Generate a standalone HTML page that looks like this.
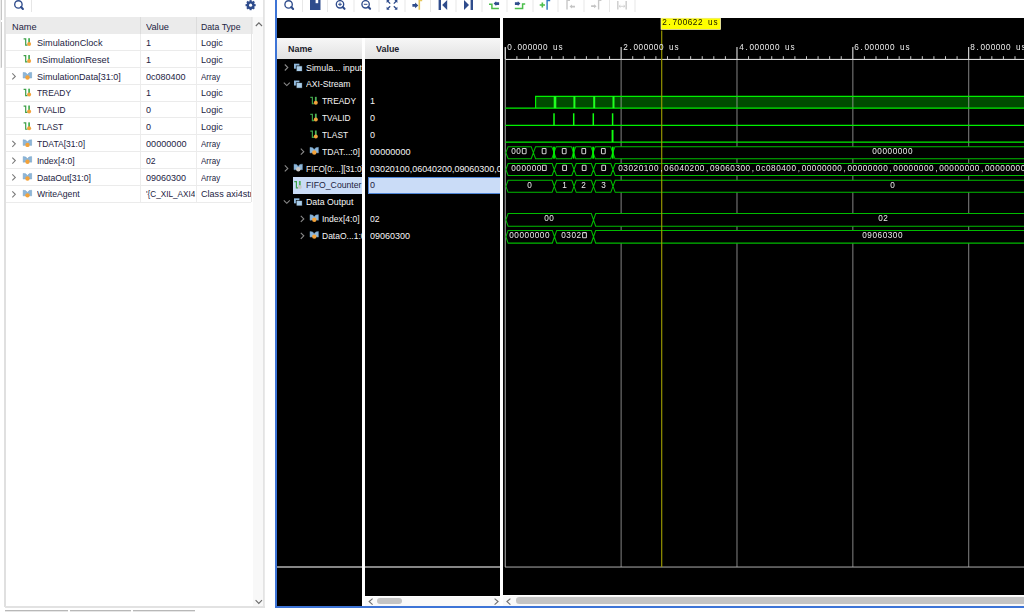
<!DOCTYPE html><html><head><meta charset="utf-8"><title>Vivado Simulation</title><style>
*{margin:0;padding:0;box-sizing:border-box}
html,body{width:1024px;height:612px;overflow:hidden;background:#fff}
body{position:relative;font-family:"Liberation Sans",sans-serif;font-size:9px}
.a{position:absolute}
.t{position:absolute;white-space:nowrap;line-height:12px;color:#23233f}
.w{color:#f4f4f4}
.m{position:absolute;white-space:nowrap;font-family:"Liberation Sans",sans-serif;font-size:8.2px;line-height:10px;color:#ececec;will-change:transform}
.m i{display:inline-block;width:5.1px;text-align:center;font-style:normal}
svg{position:absolute;left:0;top:0}
</style></head><body>
<div class="a" style="left:0px;top:0px;width:1px;height:68px;background:#ececec;"></div>
<div class="a" style="left:1px;top:0px;width:1px;height:20px;background:#c6c6c6;"></div>
<div class="a" style="left:1px;top:21.5px;width:1px;height:46px;background:#c6c6c6;border-bottom-left-radius:1px"></div>
<div class="a" style="left:4.2px;top:0px;width:1.6px;height:607px;background:#e0e0e0;"></div>
<div class="a" style="left:262.5px;top:0px;width:2.5px;height:608px;background:#e6e6e6;background:linear-gradient(90deg,#e0e0e0,#ececec)"></div>
<div class="a" style="left:4.5px;top:606.4px;width:260.5px;height:1.6px;background:#e2e2e2;"></div>
<div class="a" style="left:5.5px;top:17.0px;width:245.5px;height:16.6px;background:#ebebeb;"></div>
<div class="a" style="left:253px;top:17.0px;width:9.5px;height:589.4px;background:#f8f8f8;"></div>
<div class="a" style="left:250.5px;top:17.0px;width:2.5px;height:16.6px;background:#ebebeb;"></div>
<div class="a" style="left:140px;top:17.0px;width:1px;height:16.6px;background:#dcdcdc;"></div>
<div class="a" style="left:140px;top:33.6px;width:1px;height:168.29999999999998px;background:#ececec;"></div>
<div class="a" style="left:195.5px;top:17.0px;width:1px;height:16.6px;background:#dcdcdc;"></div>
<div class="a" style="left:195.5px;top:33.6px;width:1px;height:168.29999999999998px;background:#ececec;"></div>
<div class="a" style="left:250.5px;top:17.0px;width:1px;height:184.89999999999998px;background:#e4e4e4;"></div>
<div class="a" style="left:5.5px;top:50.03px;width:245px;height:1px;background:#ebebeb;"></div>
<div class="a" style="left:5.5px;top:66.85999999999999px;width:245px;height:1px;background:#ebebeb;"></div>
<div class="a" style="left:5.5px;top:83.69px;width:245px;height:1px;background:#ebebeb;"></div>
<div class="a" style="left:5.5px;top:100.51999999999998px;width:245px;height:1px;background:#ebebeb;"></div>
<div class="a" style="left:5.5px;top:117.35px;width:245px;height:1px;background:#ebebeb;"></div>
<div class="a" style="left:5.5px;top:134.17999999999998px;width:245px;height:1px;background:#ebebeb;"></div>
<div class="a" style="left:5.5px;top:151.01px;width:245px;height:1px;background:#ebebeb;"></div>
<div class="a" style="left:5.5px;top:167.83999999999997px;width:245px;height:1px;background:#ebebeb;"></div>
<div class="a" style="left:5.5px;top:184.66999999999996px;width:245px;height:1px;background:#ebebeb;"></div>
<div class="a" style="left:5.5px;top:201.49999999999997px;width:245px;height:1px;background:#ebebeb;"></div>
<div class="a" style="left:31px;top:0px;width:1px;height:12px;background:#e6e6e6;"></div>
<div class="a" style="left:5px;top:609.5px;width:62.5px;height:3px;background:#e6e6e6;border-top:1px solid #b8b8b8"></div>
<div class="a" style="left:69.5px;top:609.5px;width:61.5px;height:3px;background:#e6e6e6;border-top:1px solid #b8b8b8"></div>
<div class="a" style="left:133px;top:609.5px;width:61.5px;height:3px;background:#e6e6e6;border-top:1px solid #b8b8b8"></div>
<div class="t" style="left:11.5px;top:20.9px;"><span style="display:inline-block;transform:scaleX(1.0206);transform-origin:0 0">Name</span></div>
<div class="t" style="left:146px;top:20.9px;"><span style="display:inline-block;transform:scaleX(1.0273);transform-origin:0 0">Value</span></div>
<div class="t" style="left:201px;top:20.9px;"><span style="display:inline-block;transform:scaleX(0.9668);transform-origin:0 0">Data Type</span></div>
<div class="t" style="left:37px;top:36.9px;"><span style="display:inline-block;transform:scaleX(1.0151);transform-origin:0 0">SimulationClock</span></div>
<div class="t" style="left:146px;top:36.9px;width:48.5px;overflow:hidden;"><span style="display:inline-block;transform:scaleX(0.9984);transform-origin:0 0">1</span></div>
<div class="t" style="left:201px;top:36.9px;width:49.5px;overflow:hidden;"><span style="display:inline-block;transform:scaleX(1.0133);transform-origin:0 0">Logic</span></div>
<div class="t" style="left:37px;top:53.73px;"><span style="display:inline-block;transform:scaleX(1.0236);transform-origin:0 0">nSimulationReset</span></div>
<div class="t" style="left:146px;top:53.73px;width:48.5px;overflow:hidden;"><span style="display:inline-block;transform:scaleX(0.9984);transform-origin:0 0">1</span></div>
<div class="t" style="left:201px;top:53.73px;width:49.5px;overflow:hidden;"><span style="display:inline-block;transform:scaleX(1.0133);transform-origin:0 0">Logic</span></div>
<div class="t" style="left:37px;top:70.55999999999999px;"><span style="display:inline-block;transform:scaleX(1.0019);transform-origin:0 0">SimulationData[31:0]</span></div>
<div class="t" style="left:146px;top:70.55999999999999px;width:48.5px;overflow:hidden;"><span style="display:inline-block;transform:scaleX(0.9991);transform-origin:0 0">0c080400</span></div>
<div class="t" style="left:201px;top:70.55999999999999px;width:49.5px;overflow:hidden;"><span style="display:inline-block;transform:scaleX(0.8930);transform-origin:0 0">Array</span></div>
<div class="t" style="left:37px;top:87.39px;"><span style="display:inline-block;transform:scaleX(0.9313);transform-origin:0 0">TREADY</span></div>
<div class="t" style="left:146px;top:87.39px;width:48.5px;overflow:hidden;"><span style="display:inline-block;transform:scaleX(0.9984);transform-origin:0 0">1</span></div>
<div class="t" style="left:201px;top:87.39px;width:49.5px;overflow:hidden;"><span style="display:inline-block;transform:scaleX(1.0133);transform-origin:0 0">Logic</span></div>
<div class="t" style="left:37px;top:104.21999999999998px;"><span style="display:inline-block;transform:scaleX(0.9274);transform-origin:0 0">TVALID</span></div>
<div class="t" style="left:146px;top:104.21999999999998px;width:48.5px;overflow:hidden;"><span style="display:inline-block;transform:scaleX(0.9984);transform-origin:0 0">0</span></div>
<div class="t" style="left:201px;top:104.21999999999998px;width:49.5px;overflow:hidden;"><span style="display:inline-block;transform:scaleX(1.0133);transform-origin:0 0">Logic</span></div>
<div class="t" style="left:37px;top:121.05px;"><span style="display:inline-block;transform:scaleX(0.9320);transform-origin:0 0">TLAST</span></div>
<div class="t" style="left:146px;top:121.05px;width:48.5px;overflow:hidden;"><span style="display:inline-block;transform:scaleX(0.9984);transform-origin:0 0">0</span></div>
<div class="t" style="left:201px;top:121.05px;width:49.5px;overflow:hidden;"><span style="display:inline-block;transform:scaleX(1.0133);transform-origin:0 0">Logic</span></div>
<div class="t" style="left:37px;top:137.88px;"><span style="display:inline-block;transform:scaleX(0.9471);transform-origin:0 0">TDATA[31:0]</span></div>
<div class="t" style="left:146px;top:137.88px;width:48.5px;overflow:hidden;"><span style="display:inline-block;transform:scaleX(1.0115);transform-origin:0 0">00000000</span></div>
<div class="t" style="left:201px;top:137.88px;width:49.5px;overflow:hidden;"><span style="display:inline-block;transform:scaleX(0.8930);transform-origin:0 0">Array</span></div>
<div class="t" style="left:37px;top:154.71px;"><span style="display:inline-block;transform:scaleX(0.9488);transform-origin:0 0">Index[4:0]</span></div>
<div class="t" style="left:146px;top:154.71px;width:48.5px;overflow:hidden;"><span style="display:inline-block;transform:scaleX(0.9591);transform-origin:0 0">02</span></div>
<div class="t" style="left:201px;top:154.71px;width:49.5px;overflow:hidden;"><span style="display:inline-block;transform:scaleX(0.8930);transform-origin:0 0">Array</span></div>
<div class="t" style="left:37px;top:171.54px;"><span style="display:inline-block;transform:scaleX(0.9638);transform-origin:0 0">DataOut[31:0]</span></div>
<div class="t" style="left:146px;top:171.54px;width:48.5px;overflow:hidden;"><span style="display:inline-block;transform:scaleX(0.9984);transform-origin:0 0">09060300</span></div>
<div class="t" style="left:201px;top:171.54px;width:49.5px;overflow:hidden;"><span style="display:inline-block;transform:scaleX(0.8930);transform-origin:0 0">Array</span></div>
<div class="t" style="left:37px;top:188.36999999999998px;"><span style="display:inline-block;transform:scaleX(0.9605);transform-origin:0 0">WriteAgent</span></div>
<div class="t" style="left:146px;top:188.36999999999998px;width:48.5px;overflow:hidden;"><span style="display:inline-block;transform:scaleX(0.9076);transform-origin:0 0">'{C_XIL_AXI4S</span></div>
<div class="t" style="left:201px;top:188.36999999999998px;width:49.5px;overflow:hidden;"><span style="display:inline-block;transform:scaleX(1.0071);transform-origin:0 0">Class axi4stream</span></div>
<div class="a" style="left:275px;top:0px;width:2px;height:608px;background:#3d74d6;"></div>
<div class="a" style="left:275px;top:606px;width:749px;height:2px;background:#3d74d6;"></div>
<div class="a" style="left:277px;top:18px;width:747px;height:588px;background:#000;"></div>
<div class="a" style="left:277px;top:37.5px;width:85px;height:21.5px;background:#eee;background:linear-gradient(#f7f7f7,#e2e2e2)"></div>
<div class="a" style="left:365px;top:37.5px;width:135px;height:21.5px;background:#eee;background:linear-gradient(#f7f7f7,#e2e2e2)"></div>
<div class="a" style="left:362px;top:37.5px;width:3px;height:568.5px;background:#fff;"></div>
<div class="a" style="left:500px;top:18px;width:3px;height:588px;background:#fff;"></div>
<div class="t" style="left:288px;top:43px;font-weight:bold;font-size:9.6px;color:#1c1c2c"><span style="display:inline-block;transform:scaleX(0.93);transform-origin:0 0">Name</span></div>
<div class="t" style="left:376px;top:43px;font-weight:bold;font-size:9.6px;color:#1c1c2c"><span style="display:inline-block;transform:scaleX(0.93);transform-origin:0 0">Value</span></div>
<div class="a" style="left:277px;top:566.4px;width:85px;height:1.3px;background:#858585;"></div>
<div class="a" style="left:365px;top:566.4px;width:135px;height:1.3px;background:#858585;"></div>
<div class="a" style="left:365px;top:595.6px;width:135px;height:10.4px;background:#f9f9f9;border-top:1.4px solid #fff"></div>
<div class="a" style="left:377px;top:598px;width:25px;height:6px;background:#c4c4c4;border-radius:3px"></div>
<div class="a" style="left:503px;top:595.2px;width:521px;height:10.8px;background:#f9f9f9;border-top:1.6px solid #fff"></div>
<div class="a" style="left:515.5px;top:597.3px;width:520px;height:6.7px;background:#c4c4c4;border-radius:3.3px"></div>
<div class="a" style="left:293px;top:177.10999999999999px;width:69px;height:16.9px;background:#cadcf7;"></div>
<div class="a" style="left:367.5px;top:177.10999999999999px;width:132.5px;height:16.7px;background:#cadcf7;border:1px solid #4f86d8;border-right:none"></div>
<div class="t" style="left:305.5px;top:61.6px;width:56.5px;overflow:hidden;color:#f6f6f6"><span style="display:inline-block;transform:scaleX(0.9834);transform-origin:0 0">Simula... input</span></div>
<div class="t" style="left:305.5px;top:78.43px;width:56.5px;overflow:hidden;color:#f6f6f6"><span style="display:inline-block;transform:scaleX(0.9568);transform-origin:0 0">AXI-Stream</span></div>
<div class="t" style="left:321.5px;top:95.26px;width:40.5px;overflow:hidden;color:#f6f6f6"><span style="display:inline-block;transform:scaleX(0.9313);transform-origin:0 0">TREADY</span></div>
<div class="t" style="left:370px;top:95.26px;width:130px;overflow:hidden;color:#f6f6f6"><span style="display:inline-block;transform:scaleX(0.9984);transform-origin:0 0">1</span></div>
<div class="t" style="left:321.5px;top:112.09px;width:40.5px;overflow:hidden;color:#f6f6f6"><span style="display:inline-block;transform:scaleX(0.9274);transform-origin:0 0">TVALID</span></div>
<div class="t" style="left:370px;top:112.09px;width:130px;overflow:hidden;color:#f6f6f6"><span style="display:inline-block;transform:scaleX(0.9984);transform-origin:0 0">0</span></div>
<div class="t" style="left:321.5px;top:128.92px;width:40.5px;overflow:hidden;color:#f6f6f6"><span style="display:inline-block;transform:scaleX(0.9320);transform-origin:0 0">TLAST</span></div>
<div class="t" style="left:370px;top:128.92px;width:130px;overflow:hidden;color:#f6f6f6"><span style="display:inline-block;transform:scaleX(0.9984);transform-origin:0 0">0</span></div>
<div class="t" style="left:321.5px;top:145.75px;width:40.5px;overflow:hidden;color:#f6f6f6"><span style="display:inline-block;transform:scaleX(0.9660);transform-origin:0 0">TDAT...:0]</span></div>
<div class="t" style="left:370px;top:145.75px;width:130px;overflow:hidden;color:#f6f6f6"><span style="display:inline-block;transform:scaleX(1.0115);transform-origin:0 0">00000000</span></div>
<div class="t" style="left:305.5px;top:162.58px;width:56.5px;overflow:hidden;color:#f6f6f6"><span style="display:inline-block;transform:scaleX(0.9189);transform-origin:0 0">FIFO[0:...][31:0]</span></div>
<div class="t" style="left:370px;top:162.58px;width:130px;overflow:hidden;color:#f6f6f6"><span style="display:inline-block;transform:scaleX(0.9924);transform-origin:0 0">03020100,06040200,09060300,0c080400</span></div>
<div class="t" style="left:305.5px;top:179.41px;width:56.5px;overflow:hidden;color:#23233f"><span style="display:inline-block;transform:scaleX(0.9650);transform-origin:0 0">FIFO_Counter</span></div>
<div class="t" style="left:370px;top:179.41px;width:130px;overflow:hidden;color:#23233f"><span style="display:inline-block;transform:scaleX(0.9984);transform-origin:0 0">0</span></div>
<div class="t" style="left:305.5px;top:196.23999999999998px;width:56.5px;overflow:hidden;color:#f6f6f6"><span style="display:inline-block;transform:scaleX(0.9768);transform-origin:0 0">Data Output</span></div>
<div class="t" style="left:321.5px;top:213.06999999999996px;width:40.5px;overflow:hidden;color:#f6f6f6"><span style="display:inline-block;transform:scaleX(0.9488);transform-origin:0 0">Index[4:0]</span></div>
<div class="t" style="left:370px;top:213.06999999999996px;width:130px;overflow:hidden;color:#f6f6f6"><span style="display:inline-block;transform:scaleX(0.9591);transform-origin:0 0">02</span></div>
<div class="t" style="left:321.5px;top:229.9px;width:40.5px;overflow:hidden;color:#f6f6f6"><span style="display:inline-block;transform:scaleX(0.9445);transform-origin:0 0">DataO...1:0]</span></div>
<div class="t" style="left:370px;top:229.9px;width:130px;overflow:hidden;color:#f6f6f6"><span style="display:inline-block;transform:scaleX(0.9984);transform-origin:0 0">09060300</span></div>
<svg width="1024" height="612" viewBox="0 0 1024 612"><circle cx="18.4" cy="4.4" r="3.7" fill="none" stroke="#2f4c8c" stroke-width="1.35"/><line x1="21.099999999999998" y1="7.1000000000000005" x2="22.9" y2="8.9" stroke="#2f4c8c" stroke-width="2.1" stroke-linecap="round"/><g fill="#2f4c8c"><circle cx="250.6" cy="5.15" r="4.0"/><rect x="249.55" y="0.1" width="2.1" height="3" transform="rotate(0 250.6 5.15)"/><rect x="249.55" y="0.1" width="2.1" height="3" transform="rotate(45 250.6 5.15)"/><rect x="249.55" y="0.1" width="2.1" height="3" transform="rotate(90 250.6 5.15)"/><rect x="249.55" y="0.1" width="2.1" height="3" transform="rotate(135 250.6 5.15)"/><rect x="249.55" y="0.1" width="2.1" height="3" transform="rotate(180 250.6 5.15)"/><rect x="249.55" y="0.1" width="2.1" height="3" transform="rotate(225 250.6 5.15)"/><rect x="249.55" y="0.1" width="2.1" height="3" transform="rotate(270 250.6 5.15)"/><rect x="249.55" y="0.1" width="2.1" height="3" transform="rotate(315 250.6 5.15)"/></g><circle cx="250.6" cy="5.15" r="1.55" fill="#fff"/><path d="M255.8 26 L258.9 22.8 L262 26" fill="none" stroke="#6a6a6a" stroke-width="1.1"/><path d="M255.6 600.2 L258.8 603.4 L262 600.2" fill="none" stroke="#6a6a6a" stroke-width="1.1"/><path d="M23.6 38.800000000000004H25.700000000000003V45.1H27.6" fill="none" stroke="#3d9e47" stroke-width="1.2"/><rect x="28.200000000000003" y="38.2" width="1.8" height="6" fill="#4fb35a"/><circle cx="29.1" cy="44.1" r="2.0" fill="#f2a23a"/><path d="M23.6 55.63H25.700000000000003V61.93H27.6" fill="none" stroke="#3d9e47" stroke-width="1.2"/><rect x="28.200000000000003" y="55.03" width="1.8" height="6" fill="#4fb35a"/><circle cx="29.1" cy="60.93" r="2.0" fill="#f2a23a"/><path d="M23.2 72.46L25.8 72.86L27.4 74.66L29.0 72.86L31.6 72.46V78.05999999999999L27.4 77.66L23.2 78.05999999999999Z" fill="#8db6d9" stroke="#6f9cc2" stroke-width="0.5"/><circle cx="27.5" cy="77.55999999999999" r="2.2" fill="#f2a23a"/><path d="M12.3 73.46L15.3 76.46L12.3 79.46" fill="none" stroke="#7a7a7a" stroke-width="1.1"/><path d="M23.6 89.28999999999999H25.700000000000003V95.59H27.6" fill="none" stroke="#3d9e47" stroke-width="1.2"/><rect x="28.200000000000003" y="88.69" width="1.8" height="6" fill="#4fb35a"/><circle cx="29.1" cy="94.59" r="2.0" fill="#f2a23a"/><path d="M23.6 106.11999999999998H25.700000000000003V112.41999999999999H27.6" fill="none" stroke="#3d9e47" stroke-width="1.2"/><rect x="28.200000000000003" y="105.51999999999998" width="1.8" height="6" fill="#4fb35a"/><circle cx="29.1" cy="111.41999999999999" r="2.0" fill="#f2a23a"/><path d="M23.6 122.94999999999999H25.700000000000003V129.25H27.6" fill="none" stroke="#3d9e47" stroke-width="1.2"/><rect x="28.200000000000003" y="122.35" width="1.8" height="6" fill="#4fb35a"/><circle cx="29.1" cy="128.25" r="2.0" fill="#f2a23a"/><path d="M23.2 139.77999999999997L25.8 140.17999999999998L27.4 141.97999999999996L29.0 140.17999999999998L31.6 139.77999999999997V145.37999999999997L27.4 144.97999999999996L23.2 145.37999999999997Z" fill="#8db6d9" stroke="#6f9cc2" stroke-width="0.5"/><circle cx="27.5" cy="144.87999999999997" r="2.2" fill="#f2a23a"/><path d="M12.3 140.77999999999997L15.3 143.77999999999997L12.3 146.77999999999997" fill="none" stroke="#7a7a7a" stroke-width="1.1"/><path d="M23.2 156.60999999999999L25.8 157.01L27.4 158.80999999999997L29.0 157.01L31.6 156.60999999999999V162.20999999999998L27.4 161.80999999999997L23.2 162.20999999999998Z" fill="#8db6d9" stroke="#6f9cc2" stroke-width="0.5"/><circle cx="27.5" cy="161.70999999999998" r="2.2" fill="#f2a23a"/><path d="M12.3 157.60999999999999L15.3 160.60999999999999L12.3 163.60999999999999" fill="none" stroke="#7a7a7a" stroke-width="1.1"/><path d="M23.2 173.43999999999997L25.8 173.83999999999997L27.4 175.63999999999996L29.0 173.83999999999997L31.6 173.43999999999997V179.03999999999996L27.4 178.63999999999996L23.2 179.03999999999996Z" fill="#8db6d9" stroke="#6f9cc2" stroke-width="0.5"/><circle cx="27.5" cy="178.53999999999996" r="2.2" fill="#f2a23a"/><path d="M12.3 174.43999999999997L15.3 177.43999999999997L12.3 180.43999999999997" fill="none" stroke="#7a7a7a" stroke-width="1.1"/><path d="M23.2 190.26999999999995L25.8 190.66999999999996L27.4 192.46999999999994L29.0 190.66999999999996L31.6 190.26999999999995V195.86999999999995L27.4 195.46999999999994L23.2 195.86999999999995Z" fill="#8db6d9" stroke="#6f9cc2" stroke-width="0.5"/><circle cx="27.5" cy="195.36999999999995" r="2.2" fill="#f2a23a"/><path d="M12.3 191.26999999999995L15.3 194.26999999999995L12.3 197.26999999999995" fill="none" stroke="#7a7a7a" stroke-width="1.1"/><path d="M284.8 64.5L287.8 67.5L284.8 70.5" fill="none" stroke="#8a8a8a" stroke-width="1.1"/><rect x="294" y="63.7" width="5.4" height="5" fill="#8fb8dc"/><rect x="296.2" y="65.9" width="6" height="5.4" fill="#a9cde9" stroke="#000" stroke-width="0.6"/><path d="M283.8 82.53L286.8 85.53L289.8 82.53" fill="none" stroke="#8a8a8a" stroke-width="1.1"/><rect x="294" y="80.53" width="5.4" height="5" fill="#8fb8dc"/><rect x="296.2" y="82.73" width="6" height="5.4" fill="#a9cde9" stroke="#000" stroke-width="0.6"/><path d="M310.3 97.46H312.40000000000003V103.76H314.3" fill="none" stroke="#3d9e47" stroke-width="1.2"/><rect x="314.90000000000003" y="96.86" width="1.8" height="6" fill="#4fb35a"/><circle cx="315.8" cy="102.76" r="2.0" fill="#f2a23a"/><path d="M310.3 114.28999999999999H312.40000000000003V120.59H314.3" fill="none" stroke="#3d9e47" stroke-width="1.2"/><rect x="314.90000000000003" y="113.69" width="1.8" height="6" fill="#4fb35a"/><circle cx="315.8" cy="119.59" r="2.0" fill="#f2a23a"/><path d="M310.3 131.11999999999998H312.40000000000003V137.42H314.3" fill="none" stroke="#3d9e47" stroke-width="1.2"/><rect x="314.90000000000003" y="130.51999999999998" width="1.8" height="6" fill="#4fb35a"/><circle cx="315.8" cy="136.42" r="2.0" fill="#f2a23a"/><path d="M300.8 148.65L303.8 151.65L300.8 154.65" fill="none" stroke="#8a8a8a" stroke-width="1.1"/><path d="M310 147.35L312.6 147.75L314.2 149.54999999999998L315.8 147.75L318.4 147.35V152.95L314.2 152.54999999999998L310 152.95Z" fill="#8db6d9" stroke="#6f9cc2" stroke-width="0.5"/><circle cx="314.3" cy="152.45" r="2.2" fill="#f2a23a"/><path d="M284.8 165.48000000000002L287.8 168.48000000000002L284.8 171.48000000000002" fill="none" stroke="#8a8a8a" stroke-width="1.1"/><path d="M294 164.18L296.6 164.58L298.2 166.38L299.8 164.58L302.4 164.18V169.78L298.2 169.38L294 169.78Z" fill="#8db6d9" stroke="#6f9cc2" stroke-width="0.5"/><circle cx="298.3" cy="169.28" r="2.2" fill="#c8c8c8"/><path d="M294.3 181.60999999999999H296.40000000000003V187.91H298.3" fill="none" stroke="#3d9e47" stroke-width="1.2"/><rect x="298.90000000000003" y="181.01" width="1.8" height="6" fill="#4fb35a"/><circle cx="299.8" cy="186.91" r="2.0" fill="#c8c8c8"/><path d="M283.8 200.33999999999997L286.8 203.33999999999997L289.8 200.33999999999997" fill="none" stroke="#8a8a8a" stroke-width="1.1"/><rect x="294" y="198.33999999999997" width="5.4" height="5" fill="#8fb8dc"/><rect x="296.2" y="200.53999999999996" width="6" height="5.4" fill="#a9cde9" stroke="#000" stroke-width="0.6"/><path d="M300.8 215.96999999999997L303.8 218.96999999999997L300.8 221.96999999999997" fill="none" stroke="#8a8a8a" stroke-width="1.1"/><path d="M310 214.66999999999996L312.6 215.06999999999996L314.2 216.86999999999995L315.8 215.06999999999996L318.4 214.66999999999996V220.26999999999995L314.2 219.86999999999995L310 220.26999999999995Z" fill="#8db6d9" stroke="#6f9cc2" stroke-width="0.5"/><circle cx="314.3" cy="219.76999999999995" r="2.2" fill="#f2a23a"/><path d="M300.8 232.8L303.8 235.8L300.8 238.8" fill="none" stroke="#8a8a8a" stroke-width="1.1"/><path d="M310 231.5L312.6 231.9L314.2 233.7L315.8 231.9L318.4 231.5V237.1L314.2 236.7L310 237.1Z" fill="#8db6d9" stroke="#6f9cc2" stroke-width="0.5"/><circle cx="314.3" cy="236.6" r="2.2" fill="#f2a23a"/><circle cx="288.6" cy="4.4" r="3.7" fill="none" stroke="#2f4c8c" stroke-width="1.35"/><line x1="291.3" y1="7.1000000000000005" x2="293.1" y2="8.9" stroke="#2f4c8c" stroke-width="2.1" stroke-linecap="round"/><rect x="302" y="0" width="1" height="12" fill="#e8e8e8"/><rect x="327" y="0" width="1" height="12" fill="#e8e8e8"/><rect x="353.5" y="0" width="1" height="12" fill="#e8e8e8"/><rect x="378.5" y="0" width="1" height="12" fill="#e8e8e8"/><rect x="404.5" y="0" width="1" height="12" fill="#e8e8e8"/><rect x="430" y="0" width="1" height="12" fill="#e8e8e8"/><rect x="455.5" y="0" width="1" height="12" fill="#e8e8e8"/><rect x="481.5" y="0" width="1" height="12" fill="#e8e8e8"/><rect x="506.5" y="0" width="1" height="12" fill="#e8e8e8"/><rect x="532.5" y="0" width="1" height="12" fill="#e8e8e8"/><rect x="557.5" y="0" width="1" height="12" fill="#e8e8e8"/><rect x="583.5" y="0" width="1" height="12" fill="#e8e8e8"/><rect x="609" y="0" width="1" height="12" fill="#e8e8e8"/><rect x="634.5" y="0" width="1" height="12" fill="#e8e8e8"/><path d="M310 0H320.5V10H310Z" fill="#2f4c8c"/><rect x="315.6" y="0" width="2.6" height="3.2" fill="#fff"/><circle cx="340" cy="4.3" r="3.7" fill="none" stroke="#2f4c8c" stroke-width="1.35"/><line x1="342.7" y1="7.0" x2="344.5" y2="8.8" stroke="#2f4c8c" stroke-width="2.1" stroke-linecap="round"/><path d="M338.2 4.3H341.8M340 2.5V6.1" stroke="#2f4c8c" stroke-width="1"/><circle cx="365.6" cy="4.3" r="3.7" fill="none" stroke="#2f4c8c" stroke-width="1.35"/><line x1="368.3" y1="7.0" x2="370.1" y2="8.8" stroke="#2f4c8c" stroke-width="2.1" stroke-linecap="round"/><path d="M363.8 4.3H367.40000000000003" stroke="#2f4c8c" stroke-width="1"/><g fill="#2f4c8c"><path d="M386.6 0H389.6L386.6 3Z"/><path d="M397.4 0H394.4L397.4 3Z"/><path d="M386.6 9.8H389.6L386.6 6.8Z"/><path d="M397.4 9.8H394.4L397.4 6.8Z"/></g><path d="M387.6 1L390.2 3.6M396.4 1L393.8 3.6M387.6 8.8L390.2 6.2M396.4 8.8L393.8 6.2" stroke="#2f4c8c" stroke-width="1.3"/><path d="M412.4 4.1H415.1V2.5L418.3 5.4L415.1 8.3V6.7H412.4Z" fill="#2f4c8c"/><path d="M419.3 9.8V0.5H422.2" fill="none" stroke="#e6c75c" stroke-width="1.6"/><rect x="438.6" y="0" width="2.4" height="10" fill="#2f4c8c"/><path d="M447.2 0L442.2 5L447.2 10Z" fill="#2f4c8c"/><rect x="470.6" y="0" width="2.4" height="10" fill="#2f4c8c"/><path d="M464 0L469 5L464 10Z" fill="#2f4c8c"/><path d="M489 4.3H491.9V8.6H498.9" fill="none" stroke="#4cbf4c" stroke-width="1.5"/><path d="M493.6 3.6L496.2 1.2V2.3H499.1V5.0H496.2V6.0Z" fill="#2f4c8c"/><path d="M514.8 8.6H522.6V4.1H525.2" fill="none" stroke="#4cbf4c" stroke-width="1.5"/><path d="M520.4 3.6L517.8 1.2V2.3H514.9V5.0H517.8V6.0Z" fill="#2f4c8c"/><path d="M539.7 5H545M542.35 2.4V7.6" stroke="#4cbf4c" stroke-width="1.6"/><path d="M547.1 9.8V0.5H550.2" fill="none" stroke="#2f78c0" stroke-width="1.4"/><path d="M567 9.6V0.4H570" fill="none" stroke="#c8c8c8" stroke-width="1.4"/><path d="M569.5 6.6L572 4.6V5.7H575V7.5H572V8.6Z" fill="#c4c4c4"/><path d="M598.6 9.6V0.4H601.4" fill="none" stroke="#c8c8c8" stroke-width="1.4"/><path d="M596.6 6.2L594.1 4.2V5.3H591.1V7.1H594.1V8.2Z" fill="#c4c4c4"/><path d="M617.8 1V9.5M626.2 1V9.5" stroke="#cfcfcf" stroke-width="1.5"/><path d="M619 6.3H625M619 6.3L620.4 5.2M619 6.3L620.4 7.4M625 6.3L623.6 5.2M625 6.3L623.6 7.4" stroke="#cfcfcf" stroke-width="0.9" fill="none"/><path d="M372.6 598.6L369.2 601.6L372.6 604.6" fill="none" stroke="#707070" stroke-width="1.2"/><path d="M494.6 598.6L498 601.6L494.6 604.6" fill="none" stroke="#707070" stroke-width="1.2"/><path d="M510.4 598.6L507 601.6L510.4 604.6" fill="none" stroke="#707070" stroke-width="1.2"/><rect x="535.6" y="96.36" width="488.4" height="11.799999999999997" fill="#004b00"/><rect x="505" y="566.4" width="519" height="1.3" fill="#858585"/><rect x="504.65000000000003" y="47.5" width="1.3" height="519.5" fill="#b4b4b4" fill-opacity="0.75"/><rect x="620.54" y="59" width="1.2" height="508" fill="#b0b0b0" fill-opacity="0.62"/><rect x="736.38" y="59" width="1.2" height="508" fill="#b0b0b0" fill-opacity="0.62"/><rect x="852.2199999999999" y="59" width="1.2" height="508" fill="#b0b0b0" fill-opacity="0.62"/><rect x="968.0600000000001" y="59" width="1.2" height="508" fill="#b0b0b0" fill-opacity="0.62"/><rect x="505.3" y="58.9" width="518.7" height="1.1" fill="#dadada"/><rect x="516.384" y="56.2" width="1" height="3" fill="#c8c8c8"/><rect x="527.968" y="56.2" width="1" height="3" fill="#c8c8c8"/><rect x="539.552" y="56.2" width="1" height="3" fill="#c8c8c8"/><rect x="551.136" y="56.2" width="1" height="3" fill="#c8c8c8"/><rect x="562.72" y="56.2" width="1" height="3" fill="#c8c8c8"/><rect x="574.3040000000001" y="56.2" width="1" height="3" fill="#c8c8c8"/><rect x="585.888" y="56.2" width="1" height="3" fill="#c8c8c8"/><rect x="597.472" y="56.2" width="1" height="3" fill="#c8c8c8"/><rect x="609.056" y="56.2" width="1" height="3" fill="#c8c8c8"/><rect x="632.224" y="56.2" width="1" height="3" fill="#c8c8c8"/><rect x="643.808" y="56.2" width="1" height="3" fill="#c8c8c8"/><rect x="655.392" y="56.2" width="1" height="3" fill="#c8c8c8"/><rect x="666.976" y="56.2" width="1" height="3" fill="#c8c8c8"/><rect x="678.56" y="56.2" width="1" height="3" fill="#c8c8c8"/><rect x="690.144" y="56.2" width="1" height="3" fill="#c8c8c8"/><rect x="701.7280000000001" y="56.2" width="1" height="3" fill="#c8c8c8"/><rect x="713.312" y="56.2" width="1" height="3" fill="#c8c8c8"/><rect x="724.8960000000001" y="56.2" width="1" height="3" fill="#c8c8c8"/><rect x="748.0640000000001" y="56.2" width="1" height="3" fill="#c8c8c8"/><rect x="759.648" y="56.2" width="1" height="3" fill="#c8c8c8"/><rect x="771.232" y="56.2" width="1" height="3" fill="#c8c8c8"/><rect x="782.816" y="56.2" width="1" height="3" fill="#c8c8c8"/><rect x="794.4000000000001" y="56.2" width="1" height="3" fill="#c8c8c8"/><rect x="805.984" y="56.2" width="1" height="3" fill="#c8c8c8"/><rect x="817.568" y="56.2" width="1" height="3" fill="#c8c8c8"/><rect x="829.152" y="56.2" width="1" height="3" fill="#c8c8c8"/><rect x="840.7360000000001" y="56.2" width="1" height="3" fill="#c8c8c8"/><rect x="863.904" y="56.2" width="1" height="3" fill="#c8c8c8"/><rect x="875.488" y="56.2" width="1" height="3" fill="#c8c8c8"/><rect x="887.0720000000001" y="56.2" width="1" height="3" fill="#c8c8c8"/><rect x="898.6560000000001" y="56.2" width="1" height="3" fill="#c8c8c8"/><rect x="910.24" y="56.2" width="1" height="3" fill="#c8c8c8"/><rect x="921.8240000000001" y="56.2" width="1" height="3" fill="#c8c8c8"/><rect x="933.4080000000001" y="56.2" width="1" height="3" fill="#c8c8c8"/><rect x="944.9920000000001" y="56.2" width="1" height="3" fill="#c8c8c8"/><rect x="956.576" y="56.2" width="1" height="3" fill="#c8c8c8"/><rect x="979.7440000000001" y="56.2" width="1" height="3" fill="#c8c8c8"/><rect x="991.328" y="56.2" width="1" height="3" fill="#c8c8c8"/><rect x="1002.912" y="56.2" width="1" height="3" fill="#c8c8c8"/><rect x="1014.4960000000001" y="56.2" width="1" height="3" fill="#c8c8c8"/><rect x="504.75" y="47" width="1.1" height="12" fill="#e0e0e0"/><rect x="620.59" y="47" width="1.1" height="12" fill="#e0e0e0"/><rect x="736.4300000000001" y="47" width="1.1" height="12" fill="#e0e0e0"/><rect x="852.27" y="47" width="1.1" height="12" fill="#e0e0e0"/><rect x="968.1100000000001" y="47" width="1.1" height="12" fill="#e0e0e0"/><path d="M505.3 108.16H535.6V96.36H1024M535.6 108.16H1024" fill="none" stroke="#00f000" stroke-width="1.2"/><rect x="553.7" y="96.36" width="2.6" height="11.799999999999997" fill="#20ff20"/><rect x="573.4" y="96.36" width="2.0" height="11.799999999999997" fill="#20ff20"/><rect x="593.2" y="96.36" width="2.0" height="11.799999999999997" fill="#20ff20"/><rect x="612.5" y="96.36" width="2.0" height="11.799999999999997" fill="#20ff20"/><path d="M505.3 125.28999999999999H1024" stroke="#00f000" stroke-width="1.2"/><rect x="553.25" y="113.28999999999999" width="1.5" height="12.0" fill="#10ff10"/><rect x="572.95" y="113.28999999999999" width="1.5" height="12.0" fill="#10ff10"/><rect x="592.55" y="113.28999999999999" width="1.5" height="12.0" fill="#10ff10"/><rect x="611.85" y="113.28999999999999" width="1.5" height="12.0" fill="#10ff10"/><path d="M505.3 142.12H1024" stroke="#00f000" stroke-width="1.2"/><rect x="611.6" y="129.92" width="1.9" height="12.200000000000017" fill="#10ff10"/><path d="M505.90000000000003 152.65L508.1 146.65H531.1999999999999L533.4 152.65L531.1999999999999 158.65H508.1ZM533.4 152.65L535.6 146.65H551.8L554 152.65L551.8 158.65H535.6ZM554 152.65L556.2 146.65H571.4L573.6 152.65L571.4 158.65H556.2ZM573.6 152.65L575.8000000000001 146.65H590.9L593.1 152.65L590.9 158.65H575.8000000000001ZM593.1 152.65L595.3000000000001 146.65H610.5999999999999L612.8 152.65L610.5999999999999 158.65H595.3000000000001ZM612.8 152.65L615.0 146.65H1031.8L1034 152.65L1031.8 158.65H615.0Z" fill="#000" stroke="#00bc00" stroke-width="1.05" stroke-linejoin="miter"/><rect x="553.1" y="146.65" width="1.8" height="12.0" fill="#00f000"/><rect x="572.7" y="146.65" width="1.8" height="12.0" fill="#00f000"/><rect x="592.2" y="146.65" width="1.8" height="12.0" fill="#00f000"/><rect x="611.9" y="146.65" width="1.8" height="12.0" fill="#00f000"/><path d="M505.90000000000003 169.48000000000002L508.1 163.48000000000002H552.0999999999999L554.3 169.48000000000002L552.0999999999999 175.48000000000002H508.1ZM554.3 169.48000000000002L556.5 163.48000000000002H571.8L574 169.48000000000002L571.8 175.48000000000002H556.5ZM574 169.48000000000002L576.2 163.48000000000002H591.3L593.5 169.48000000000002L591.3 175.48000000000002H576.2ZM593.5 169.48000000000002L595.7 163.48000000000002H610.8L613 169.48000000000002L610.8 175.48000000000002H595.7ZM613 169.48000000000002L615.2 163.48000000000002H1031.8L1034 169.48000000000002L1031.8 175.48000000000002H615.2Z" fill="#000" stroke="#00bc00" stroke-width="1.05" stroke-linejoin="miter"/><path d="M505.90000000000003 186.31L508.1 180.31H552.0999999999999L554.3 186.31L552.0999999999999 192.31H508.1ZM554.3 186.31L556.5 180.31H571.8L574 186.31L571.8 192.31H556.5ZM574 186.31L576.2 180.31H591.3L593.5 186.31L591.3 192.31H576.2ZM593.5 186.31L595.7 180.31H610.8L613 186.31L610.8 192.31H595.7ZM613 186.31L615.2 180.31H1031.8L1034 186.31L1031.8 192.31H615.2Z" fill="#000" stroke="#00bc00" stroke-width="1.05" stroke-linejoin="miter"/><path d="M505.90000000000003 219.91999999999996L508.1 213.56999999999996H591.3L593.5 219.91999999999996L591.3 226.26999999999995H508.1ZM593.5 219.91999999999996L595.7 213.56999999999996H1031.8L1034 219.91999999999996L1031.8 226.26999999999995H595.7Z" fill="#000" stroke="#00bc00" stroke-width="1.05" stroke-linejoin="miter"/><path d="M505.90000000000003 236.75L508.1 230.4H552.3L554.5 236.75L552.3 243.1H508.1ZM554.5 236.75L556.7 230.4H591.3L593.5 236.75L591.3 243.1H556.7ZM593.5 236.75L595.7 230.4H1031.8L1034 236.75L1031.8 243.1H595.7Z" fill="#000" stroke="#00bc00" stroke-width="1.05" stroke-linejoin="miter"/><rect x="522.3000000000001" y="148.45" width="3.8" height="5.2" rx="0.6" fill="none" stroke="#cfcfcf" stroke-width="1.05"/><rect x="542.2" y="148.45" width="3.8" height="5.2" rx="0.6" fill="none" stroke="#cfcfcf" stroke-width="1.05"/><rect x="562.3" y="148.45" width="3.8" height="5.2" rx="0.6" fill="none" stroke="#cfcfcf" stroke-width="1.05"/><rect x="581.85" y="148.45" width="3.8" height="5.2" rx="0.6" fill="none" stroke="#cfcfcf" stroke-width="1.05"/><rect x="601.45" y="148.45" width="3.8" height="5.2" rx="0.6" fill="none" stroke="#cfcfcf" stroke-width="1.05"/><rect x="562.65" y="165.28" width="3.8" height="5.2" rx="0.6" fill="none" stroke="#cfcfcf" stroke-width="1.05"/><rect x="582.25" y="165.28" width="3.8" height="5.2" rx="0.6" fill="none" stroke="#cfcfcf" stroke-width="1.05"/><rect x="601.75" y="165.28" width="3.8" height="5.2" rx="0.6" fill="none" stroke="#cfcfcf" stroke-width="1.05"/><rect x="542.4" y="165.28" width="3.8" height="5.2" rx="0.6" fill="none" stroke="#cfcfcf" stroke-width="1.05"/><rect x="582.6" y="232.6" width="3.8" height="5.2" rx="0.6" fill="none" stroke="#cfcfcf" stroke-width="1.05"/><rect x="661.1700262400001" y="30.5" width="1.1" height="536.5" fill="#a2a000"/><rect x="661" y="18.1" width="59.6" height="11.3" fill="#ffff00" stroke="#fffad0" stroke-width="0.7"/></svg>
<div class="m" style="left:506.90px;top:43.10px;"><i>0</i><i>.</i><i>0</i><i>0</i><i>0</i><i>0</i><i>0</i><i>0</i><i>&nbsp;</i><i>u</i><i>s</i></div>
<div class="m" style="left:622.74px;top:43.10px;"><i>2</i><i>.</i><i>0</i><i>0</i><i>0</i><i>0</i><i>0</i><i>0</i><i>&nbsp;</i><i>u</i><i>s</i></div>
<div class="m" style="left:738.58px;top:43.10px;"><i>4</i><i>.</i><i>0</i><i>0</i><i>0</i><i>0</i><i>0</i><i>0</i><i>&nbsp;</i><i>u</i><i>s</i></div>
<div class="m" style="left:854.42px;top:43.10px;"><i>6</i><i>.</i><i>0</i><i>0</i><i>0</i><i>0</i><i>0</i><i>0</i><i>&nbsp;</i><i>u</i><i>s</i></div>
<div class="m" style="left:970.26px;top:43.10px;"><i>8</i><i>.</i><i>0</i><i>0</i><i>0</i><i>0</i><i>0</i><i>0</i><i>&nbsp;</i><i>u</i><i>s</i></div>
<div class="m" style="left:661.60px;top:18.40px;color:#141400"><i>2</i><i>.</i><i>7</i><i>0</i><i>0</i><i>6</i><i>2</i><i>2</i><i>&nbsp;</i><i>u</i><i>s</i></div>
<div class="m" style="left:510.80px;top:147.05px;"><i>0</i><i>0</i></div>
<div class="m" style="left:872.00px;top:147.05px;"><i>0</i><i>0</i><i>0</i><i>0</i><i>0</i><i>0</i><i>0</i><i>0</i></div>
<div class="m" style="left:510.80px;top:163.88px;"><i>0</i><i>0</i><i>0</i><i>0</i><i>0</i><i>0</i></div>
<div class="m" style="left:617.80px;top:163.88px;"><i>0</i><i>3</i><i>0</i><i>2</i><i>0</i><i>1</i><i>0</i><i>0</i><i>,</i><i>0</i><i>6</i><i>0</i><i>4</i><i>0</i><i>2</i><i>0</i><i>0</i><i>,</i><i>0</i><i>9</i><i>0</i><i>6</i><i>0</i><i>3</i><i>0</i><i>0</i><i>,</i><i>0</i><i>c</i><i>0</i><i>8</i><i>0</i><i>4</i><i>0</i><i>0</i><i>,</i><i>0</i><i>0</i><i>0</i><i>0</i><i>0</i><i>0</i><i>0</i><i>0</i><i>,</i><i>0</i><i>0</i><i>0</i><i>0</i><i>0</i><i>0</i><i>0</i><i>0</i><i>,</i><i>0</i><i>0</i><i>0</i><i>0</i><i>0</i><i>0</i><i>0</i><i>0</i><i>,</i><i>0</i><i>0</i><i>0</i><i>0</i><i>0</i><i>0</i><i>0</i><i>0</i><i>,</i><i>0</i><i>0</i><i>0</i><i>0</i><i>0</i><i>0</i><i>0</i><i>0</i></div>
<div class="m" style="left:527.25px;top:180.71px;"><i>0</i></div>
<div class="m" style="left:561.60px;top:180.71px;"><i>1</i></div>
<div class="m" style="left:581.20px;top:180.71px;"><i>2</i></div>
<div class="m" style="left:600.70px;top:180.71px;"><i>3</i></div>
<div class="m" style="left:889.95px;top:180.71px;"><i>0</i></div>
<div class="m" style="left:544.30px;top:214.37px;"><i>0</i><i>0</i></div>
<div class="m" style="left:877.65px;top:214.37px;"><i>0</i><i>2</i></div>
<div class="m" style="left:508.60px;top:231.20px;"><i>0</i><i>0</i><i>0</i><i>0</i><i>0</i><i>0</i><i>0</i><i>0</i></div>
<div class="m" style="left:560.80px;top:231.20px;"><i>0</i><i>3</i><i>0</i><i>2</i></div>
<div class="m" style="left:862.35px;top:231.20px;"><i>0</i><i>9</i><i>0</i><i>6</i><i>0</i><i>3</i><i>0</i><i>0</i></div>
</body></html>
